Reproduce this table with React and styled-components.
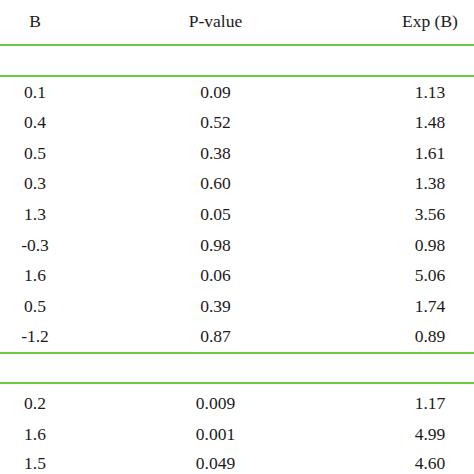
import React from 'react';
import styled, { createGlobalStyle } from 'styled-components';

const GlobalStyle = createGlobalStyle`
  html, body {
    margin: 0;
    padding: 0;
    background: #ffffff;
    overflow: hidden;
  }
`;

const Sheet = styled.div`
  width: 474px;
  height: 474px;
  overflow: hidden;
  background: #ffffff;
  color: #1c1a1b;
  font-family: "Liberation Serif", "DejaVu Serif", serif;
  font-size: 17.5px;
`;

const Row = styled.div`
  display: grid;
  grid-template-columns: 70px 291px 113px;
  align-items: center;
  height: ${p => p.h}px;
  padding-top: ${p => p.top || 0}px;
  line-height: 1;
`;

const Cell = styled.div`
  text-align: center;
  white-space: nowrap;
  &:nth-child(3) {
    padding-left: 25px;
  }
`;

const Rule = styled.div`
  height: 2px;
  background: #6dc842;
`;

const Blank = styled.div`
  height: ${p => p.h}px;
`;

const groupOne = [
  ['0.1', '0.09', '1.13'],
  ['0.4', '0.52', '1.48'],
  ['0.5', '0.38', '1.61'],
  ['0.3', '0.60', '1.38'],
  ['1.3', '0.05', '3.56'],
  ['-0.3', '0.98', '0.98'],
  ['1.6', '0.06', '5.06'],
  ['0.5', '0.39', '1.74'],
  ['-1.2', '0.87', '0.89'],
];

const groupTwo = [
  ['0.2', '0.009', '1.17'],
  ['1.6', '0.001', '4.99'],
  ['1.5', '0.049', '4.60'],
];

const DataRow = ({ values, h, top }) => (
  <Row h={h} top={top}>
    {values.map((v, i) => (
      <Cell key={i}>{v}</Cell>
    ))}
  </Row>
);

export default function App() {
  return (
    <Sheet>
      <GlobalStyle />
      <DataRow values={['B', 'P-value', 'Exp (B)']} h={44} />
      <Rule />
      <Blank h={29} />
      <Rule />
      {groupOne.map((r, i) => (
        <DataRow key={i} values={r} h={30.6} />
      ))}
      <Rule />
      <Blank h={28} />
      <Rule />
      {groupTwo.map((r, i) => (
        <DataRow key={i} values={r} h={i === 0 ? 32.5 : 29.4} top={i === 0 ? 3 : 0} />
      ))}
    </Sheet>
  );
}
